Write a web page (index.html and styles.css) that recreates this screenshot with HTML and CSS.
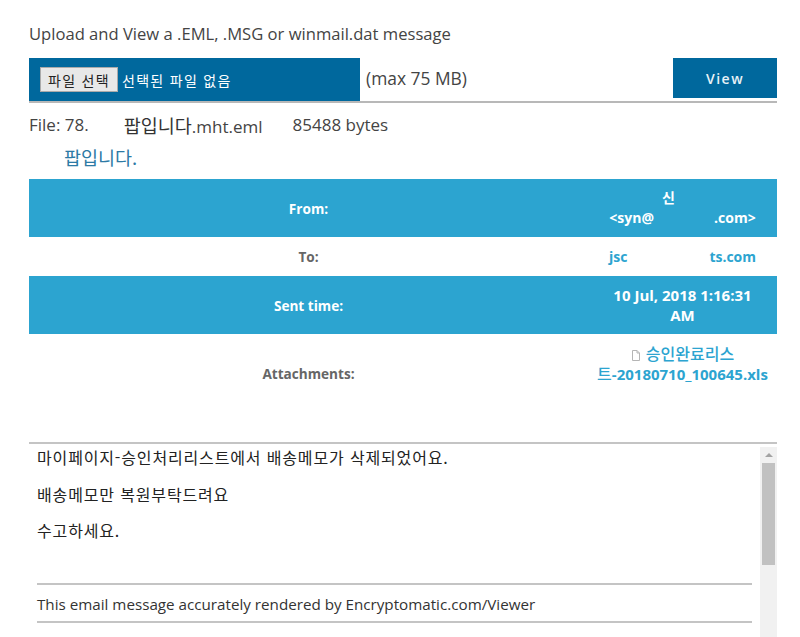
FILE: index.html
```html
<!DOCTYPE html>
<html lang="ko">
<head>
<meta charset="UTF-8">
<meta name="viewport" content="width=device-width, initial-scale=1.0">
<title>Encryptomatic Viewer</title>
<link rel="stylesheet" href="styles.css">
</head>
<body>
    <div class="page">
        <p class="title">Upload and View a .EML, .MSG or winmail.dat message</p>

        <div class="upload">
            <div class="file-box">
                <button class="file-btn">파일 선택</button>
                <span class="file-name">선택된 파일 없음</span>
            </div>
            <span class="max">(max 75 MB)</span>
            <button class="view-btn">View</button>
        </div>

        <p class="file-info">
            <span>File: 78.</span>
            <span class="file-title">팝입니다<span class="ext">.mht.eml</span></span>
            <span class="file-size">85488 bytes</span>
        </p>
        <p class="subject">팝입니다.</p>

        <table class="headers">
            <tr class="blue tall">
                <th>From:</th>
                <td>신<span class="gap-c"></span><br>&lt;syn@<span class="gap-a"></span>.com&gt;</td>
            </tr>
            <tr class="short">
                <th>To:</th>
                <td><a>jsc<span class="gap-b"></span>ts.com</a></td>
            </tr>
            <tr class="blue tall">
                <th>Sent time:</th>
                <td class="wide">10 Jul, 2018 1:16:31<br>AM</td>
            </tr>
            <tr class="attach">
                <th>Attachments:</th>
                <td class="wide">
                    <a>
                        <svg class="doc" width="10" height="11" viewBox="0 0 10 11">
                            <path d="M1.5 .5h4.500l2.500 2.500v7.500h-7z M6 .5v2.500h2.500" fill="#fff" stroke="#b5b5b5"/>
                        </svg>
                        <span class="hangul">승인완료리스</span><br><span class="hangul">트</span>-20180710_100645.xls
                    </a>
                </td>
            </tr>
        </table>

        <div class="message">
            <div class="body">
                <p>마이페이지-승인처리리스트에서 배송메모가 삭제되었어요.</p>
                <p>배송메모만 복원부탁드려요</p>
                <p>수고하세요.</p>
                <div class="rendered">This email message accurately rendered by Encryptomatic.com/Viewer</div>
            </div>
            <div class="scrollbar">
                <div class="arrow"></div>
                <div class="thumb"></div>
            </div>
        </div>
    </div>
</body>
</html>
```

FILE: styles.css
```css
html, body {
    margin: 0;
    padding: 0;
    height: 637px;
    overflow: hidden;
    background-color: #fff;
}
body {
    font-family: "Open Sans", "Noto Sans CJK KR", sans-serif;
    font-size: 16px;
    color: #444;
}
.page {
    width: 748px;
    margin-left: 29px;
}
.title {
    margin: 0;
    padding-top: 23px;
    height: 58px;
    line-height: 22px;
    box-sizing: border-box;
    font-size: 16.600px;
}
.upload {
    display: flex;
    align-items: flex-start;
    height: 43px;
    border-bottom: 2px solid #b8b8b8;
}
.file-box {
    width: 331px;
    height: 43px;
    background-color: #00689d;
    display: flex;
    align-items: center;
    padding-left: 11px;
    box-sizing: border-box;
}
.file-btn {
    width: 78px;
    height: 25px;
    padding: 0;
    font-family: "Noto Sans CJK KR", sans-serif;
    font-size: 14px;
    letter-spacing: 1.300px;
    color: #222;
    background-color: #e8e8e8;
    border: 1px solid #aaa;
}
.file-name {
    margin-left: 4px;
    font-family: "Noto Sans CJK KR", sans-serif;
    font-size: 14px;
    letter-spacing: 1.300px;
    color: #fff;
}
.max {
    margin-left: 6px;
    line-height: 41px;
    font-size: 17.400px;
}
.view-btn {
    margin-left: auto;
    width: 104px;
    height: 40px;
    border: none;
    padding: 0;
    background-color: #00689d;
    color: #e8f2f7;
    font-family: "Open Sans", sans-serif;
    font-size: 14px;
    font-weight: 600;
    letter-spacing: 1.500px;
}
.file-info {
    margin: 0;
    display: flex;
    padding-top: 11px;
    height: 33px;
    line-height: 22px;
    font-size: 17px;
}
.file-title {
    margin-left: 35px;
    font-family: "Noto Sans CJK KR", sans-serif;
    font-size: 18.500px;
    color: #333;
}
.ext {
    font-family: "Open Sans", sans-serif;
    font-size: 17px;
    color: #444;
}
.file-size {
    margin-left: 30px;
}
.subject {
    margin: 0;
    padding-left: 35px;
    height: 32px;
    line-height: 20px;
    font-family: "Noto Sans CJK KR", sans-serif;
    font-size: 18.500px;
    color: #2c7aa5;
}
.headers {
    width: 748px;
    border-collapse: collapse;
    table-layout: fixed;
    font-size: 13.600px;
    font-weight: 700;
    line-height: 20px;
    text-align: center;
}
.headers th {
    width: 559px;
    padding: 0;
    font-weight: 700;
    color: #666;
}
.headers td {
    padding: 0 8px;
    font-size: 14px;
    color: #2ca4d0;
}
.headers .wide {
    font-size: 15px;
}
.hangul {
    font-size: 16px;
    font-weight: 500;
}
.blue {
    background-color: #2ca4d0;
}
.headers .blue th, .headers .blue td {
    color: #fff;
}
.headers .blue th {
    padding-top: 2px;
}
.tall {
    height: 58px;
}
.short {
    height: 39px;
}
.attach {
    height: 78px;
}
.attach th, .attach td {
    vertical-align: top;
}
.headers .attach td {
    padding-top: 10px;
}
.headers .attach th {
    padding-top: 30px;
}
.gap-a {
    display: inline-block;
    width: 60px;
}
.gap-b {
    display: inline-block;
    width: 82px;
}
.gap-c {
    display: inline-block;
    width: 28px;
}
.doc {
    vertical-align: -1px;
    margin-right: 1px;
}
.message {
    display: flex;
    margin-top: 30px;
    height: 195px;
    border-top: 2px solid #c4c4c4;
}
.body {
    flex: 1;
    padding: 3px 8px 0 8px;
    overflow: hidden;
    font-family: "Noto Sans CJK KR", sans-serif;
    font-size: 16px;
    letter-spacing: .850px;
    color: #222;
    line-height: 20px;
}
.body p {
    margin: 0 0 16.500px;
}
.rendered {
    margin-top: 43px;
    padding: 8px 0 6px;
    height: 22px;
    line-height: 22px;
    border-top: 2px solid #c4c4c4;
    border-bottom: 2px solid #c4c4c4;
    font-family: "Open Sans", sans-serif;
    font-size: 15.200px;
    letter-spacing: 0;
    color: #333;
}
.scrollbar {
    width: 17px;
    margin-top: 3px;
    background-color: #f1f1f1;
}
.arrow {
    width: 0;
    height: 0;
    margin: 6px auto 6px;
    border-left: 4px solid transparent;
    border-right: 4px solid transparent;
    border-bottom: 4px solid #a3a3a3;
}
.thumb {
    width: 13px;
    height: 102px;
    margin: 0 auto;
    background-color: #c1c1c1;
}
```
